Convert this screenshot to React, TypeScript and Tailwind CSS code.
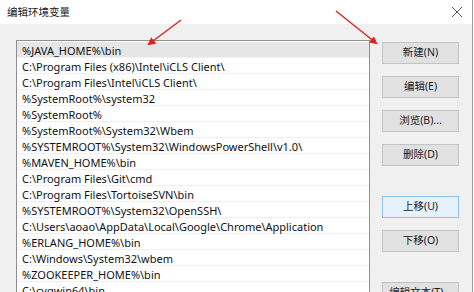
import React from "react";

const rows = [
  "%JAVA_HOME%\\bin",
  "C:\\Program Files (x86)\\Intel\\iCLS Client\\",
  "C:\\Program Files\\Intel\\iCLS Client\\",
  "%SystemRoot%\\system32",
  "%SystemRoot%",
  "%SystemRoot%\\System32\\Wbem",
  "%SYSTEMROOT%\\System32\\WindowsPowerShell\\v1.0\\",
  "%MAVEN_HOME%\\bin",
  "C:\\Program Files\\Git\\cmd",
  "C:\\Program Files\\TortoiseSVN\\bin",
  "%SYSTEMROOT%\\System32\\OpenSSH\\",
  "C:\\Users\\aoao\\AppData\\Local\\Google\\Chrome\\Application",
  "%ERLANG_HOME%\\bin",
  "C:\\Windows\\System32\\wbem",
  "%ZOOKEEPER_HOME%\\bin",
  "C:\\cygwin64\\bin",
];

const font = { fontFamily: '"Noto Sans", "Noto Sans CJK SC", sans-serif' };

function Btn({ label, active }: { label: string; active?: boolean }) {
  return (
    <div
      className={
        "h-[22px] w-[77px] flex items-center justify-center text-[10.5px] text-[#1a1a1a] border " +
        (active ? "bg-[#e5f1fb] border-[#8cc0ee]" : "bg-[#e1e1e1] border-[#c4c4c4]")
      }
    >
      {label}
    </div>
  );
}

export default function App() {
  return (
    <div className="relative w-[474px] h-[292px] overflow-hidden bg-white" style={font}>
      <div className="w-[473px] h-full border-r border-[#9a9a9a] flex flex-col bg-[#f0f0f0]">
        <div className="h-[24px] shrink-0 bg-white flex items-center justify-between pl-[7px] pr-[9px]">
          <span className="text-[10.5px] text-[#1a1a1a]" style={{ fontFamily: '"Noto Sans CJK SC", sans-serif' }}>编辑环境变量</span>
          <svg width="12" height="12" viewBox="0 0 12 12">
            <path d="M1 1 L11 11 M11 1 L1 11" stroke="#555" strokeWidth="1" />
          </svg>
        </div>
        <div className="flex pl-[16px] pt-[16px] gap-[12px]">
          <div className="w-[354px] h-[260px] shrink-0 bg-white border border-[#8f8f8f] border-b-0 pt-[1px]">
            {rows.map((r, i) => (
              <div
                key={i}
                className={
                  "h-[16px] flex items-center pl-[5px] pt-[1px] text-[11px] text-[#111] leading-none whitespace-nowrap border-b border-[#f0f0f0] " +
                  (i === 0 ? "bg-[#e6e6e6]" : "")
                }
              >
                {r}
              </div>
            ))}
          </div>
          <div className="flex flex-col pt-[2px]">
            <div className="flex flex-col gap-[12px]">
              <Btn label="新建(N)" />
              <Btn label="编辑(E)" />
              <Btn label="浏览(B)..." />
              <Btn label="删除(D)" />
            </div>
            <div className="flex flex-col gap-[12px] mt-[30px]">
              <Btn label="上移(U)" active />
              <Btn label="下移(O)" />
            </div>
            <div className="mt-[30px]">
              <Btn label="编辑文本(T)..." />
            </div>
          </div>
        </div>
      </div>
      <svg className="absolute inset-0 pointer-events-none" width="474" height="292">
        <defs>
          <marker id="ah" markerWidth="8" markerHeight="8" refX="6" refY="4" orient="auto" markerUnits="userSpaceOnUse">
            <path d="M0 0 L8 4 L0 8 Z" fill="#e0231c" />
          </marker>
        </defs>
        <line x1="181" y1="20" x2="149" y2="44" stroke="#e0231c" strokeWidth="1.4" markerEnd="url(#ah)" />
        <line x1="336" y1="11" x2="376" y2="43" stroke="#e0231c" strokeWidth="1.4" markerEnd="url(#ah)" />
      </svg>
    </div>
  );
}
